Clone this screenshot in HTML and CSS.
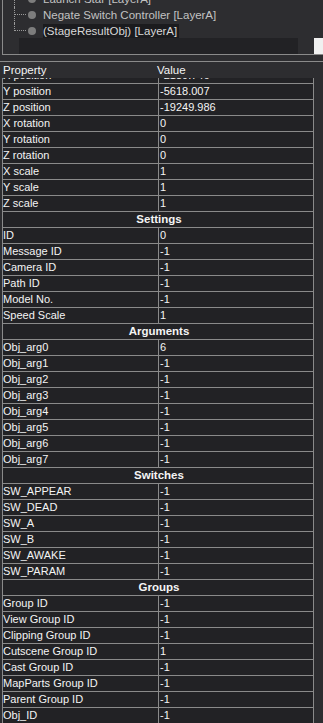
FILE: index.html
```html
<!DOCTYPE html>
<html>
<head>
<meta charset="utf-8">
<link rel="stylesheet" href="styles.css">
</head>
<body>
<div class="tree-panel">
  <div class="tree">
    <div class="tree-item"><span class="branch"></span><span class="dot"></span><span class="label">Launch Star [LayerA]</span></div>
    <div class="tree-item"><span class="branch"></span><span class="dot"></span><span class="label">Negate Switch Controller [LayerA]</span></div>
    <div class="tree-item last"><span class="branch"></span><span class="dot"></span><span class="label selected">(StageResultObj) [LayerA]</span></div>
  </div>
  <div class="hscroll">
    <div class="hscroll-track"></div>
    <div class="corner"></div>
  </div>
</div>

<div class="grid">
  <div class="grid-header">
    <div class="hcell name">Property</div>
    <div class="hcell">Value</div>
  </div>
  <div class="grid-body">
    <div class="rows">
      <div class="row"><div class="name">X position</div><div class="val">-2189.746</div></div>
      <div class="row"><div class="name">Y position</div><div class="val">-5618.007</div></div>
      <div class="row"><div class="name">Z position</div><div class="val">-19249.986</div></div>
      <div class="row"><div class="name">X rotation</div><div class="val">0</div></div>
      <div class="row"><div class="name">Y rotation</div><div class="val">0</div></div>
      <div class="row"><div class="name">Z rotation</div><div class="val">0</div></div>
      <div class="row"><div class="name">X scale</div><div class="val">1</div></div>
      <div class="row"><div class="name">Y scale</div><div class="val">1</div></div>
      <div class="row"><div class="name">Z scale</div><div class="val">1</div></div>
      <div class="row section">Settings</div>
      <div class="row"><div class="name">ID</div><div class="val">0</div></div>
      <div class="row"><div class="name">Message ID</div><div class="val">-1</div></div>
      <div class="row"><div class="name">Camera ID</div><div class="val">-1</div></div>
      <div class="row"><div class="name">Path ID</div><div class="val">-1</div></div>
      <div class="row"><div class="name">Model No.</div><div class="val">-1</div></div>
      <div class="row"><div class="name">Speed Scale</div><div class="val">1</div></div>
      <div class="row section">Arguments</div>
      <div class="row"><div class="name">Obj_arg0</div><div class="val">6</div></div>
      <div class="row"><div class="name">Obj_arg1</div><div class="val">-1</div></div>
      <div class="row"><div class="name">Obj_arg2</div><div class="val">-1</div></div>
      <div class="row"><div class="name">Obj_arg3</div><div class="val">-1</div></div>
      <div class="row"><div class="name">Obj_arg4</div><div class="val">-1</div></div>
      <div class="row"><div class="name">Obj_arg5</div><div class="val">-1</div></div>
      <div class="row"><div class="name">Obj_arg6</div><div class="val">-1</div></div>
      <div class="row"><div class="name">Obj_arg7</div><div class="val">-1</div></div>
      <div class="row section">Switches</div>
      <div class="row"><div class="name">SW_APPEAR</div><div class="val">-1</div></div>
      <div class="row"><div class="name">SW_DEAD</div><div class="val">-1</div></div>
      <div class="row"><div class="name">SW_A</div><div class="val">-1</div></div>
      <div class="row"><div class="name">SW_B</div><div class="val">-1</div></div>
      <div class="row"><div class="name">SW_AWAKE</div><div class="val">-1</div></div>
      <div class="row"><div class="name">SW_PARAM</div><div class="val">-1</div></div>
      <div class="row section">Groups</div>
      <div class="row"><div class="name">Group ID</div><div class="val">-1</div></div>
      <div class="row"><div class="name">View Group ID</div><div class="val">-1</div></div>
      <div class="row"><div class="name">Clipping Group ID</div><div class="val">-1</div></div>
      <div class="row"><div class="name">Cutscene Group ID</div><div class="val">1</div></div>
      <div class="row"><div class="name">Cast Group ID</div><div class="val">-1</div></div>
      <div class="row"><div class="name">MapParts Group ID</div><div class="val">-1</div></div>
      <div class="row"><div class="name">Parent Group ID</div><div class="val">-1</div></div>
      <div class="row"><div class="name">Obj_ID</div><div class="val">-1</div></div>
    </div>
  </div>
</div>
</body>
</html>
```

FILE: styles.css
```css
html, body {
  margin: 0;
  padding: 0;
  height: 723px;
  overflow: hidden;
  background: #2d2d30;
  font-family: "Liberation Sans", Arial, sans-serif;
}

.tree-panel {
  height: 55px;
  margin-left: 2px;
  border-left: 1px solid #8a8a8a;
  border-bottom: 1px solid #8a8a8a;
  box-sizing: border-box;
  overflow: hidden;
  display: flex;
  flex-direction: column;
}

.tree {
  margin-top: -9px;
  height: 47px;
  flex: none;
}

.tree-item {
  height: 16px;
  display: flex;
  align-items: center;
}

.branch {
  width: 11px;
  height: 16px;
  margin-left: 11px;
  border-left: 1px dotted #9a9a9a;
  position: relative;
  box-sizing: border-box;
}

.branch::after {
  content: "";
  position: absolute;
  left: 0;
  top: 7px;
  width: 11px;
  border-top: 1px dotted #9a9a9a;
}

.tree-item.last .branch {
  height: 8px;
  align-self: flex-start;
}

.dot {
  width: 8px;
  height: 8px;
  border-radius: 50%;
  background: #7d7d7d;
  margin-left: 3px;
  margin-right: 7px;
}

.label {
  color: #c2c2c2;
  font-size: 11.5px;
  line-height: 15px;
  white-space: nowrap;
  padding-right: 1px;
}

.label.selected {
  background: #1b1b1e;
  color: #d8d8d8;
  padding-right: 2px;
}

.hscroll {
  display: flex;
  height: 16px;
  flex: none;
}

.hscroll-track {
  width: 279px;
  margin-left: 16px;
  background: #222225;
}

.corner {
  width: 9px;
  margin-left: auto;
  background: #f0f0f0;
}

.grid {
  margin-top: 6px;
  color: #f4f4f4;
  font-size: 11px;
}

.grid-header {
  display: flex;
  height: 17px;
  border-top: 1px solid #8a8a8a;
  box-sizing: border-box;
  background: #2d2d30;
  position: relative;
  z-index: 1;
}

.hcell {
  line-height: 16px;
  padding-left: 1px;
  font-size: 11.5px;
}

.hcell.name {
  width: 156px;
  padding-left: 3px;
  box-sizing: border-box;
}

.grid-body {
  width: 312px;
  margin-left: 2px;
  height: 645px;
  border-left: 1px solid #8a8a8a;
  border-right: 1px solid #8a8a8a;
  box-sizing: border-box;
  background: #222225;
  overflow: hidden;
}

.rows {
  margin-top: -10px;
}

.row {
  display: flex;
  height: 16px;
  border-bottom: 1px solid #8a8a8a;
  box-sizing: border-box;
  line-height: 15px;
  white-space: nowrap;
}

.row .name {
  width: 156px;
  border-right: 1px solid #8a8a8a;
  box-sizing: border-box;
}

.row .val {
  flex: 1;
  padding-left: 1px;
}

.row.section {
  justify-content: center;
  font-weight: bold;
  font-size: 11.5px;
  padding-left: 2px;
}
```
